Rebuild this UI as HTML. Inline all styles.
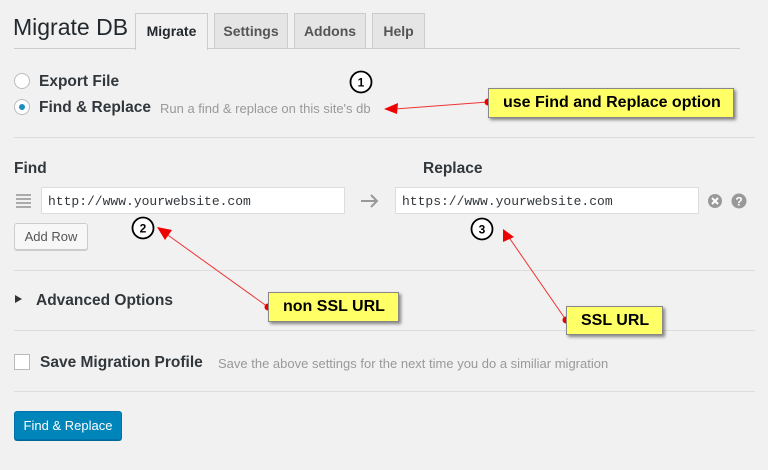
<!DOCTYPE html>
<html><head><meta charset="utf-8"><style>
*{margin:0;padding:0;box-sizing:border-box}
body{width:768px;height:470px;background:#f1f1f1;font-family:"Liberation Sans",sans-serif;color:#23282d;position:relative;overflow:hidden}
.a{position:absolute;white-space:nowrap}
.tab{position:absolute;top:13px;height:36px;background:#e5e5e5;border:1px solid #ccc;border-bottom:none;font-size:14px;font-weight:bold;color:#555;text-align:center;line-height:34px}
.hr{position:absolute;left:14px;width:741px;height:1px;background:#ddd}
.b{font-weight:bold;font-size:15.5px;color:#32373c}
.g{font-size:13px;color:#999}
.inp{position:absolute;height:27px;background:#fff;border:1px solid #ddd;font-family:"Liberation Mono",monospace;font-size:13px;color:#32373c;padding:6px 0 0 6px}
.note{position:absolute;background:#ffff66;border:1px solid #888;box-shadow:2px 2px 3px rgba(0,0,0,.45);font-weight:bold;font-size:16px;color:#000;line-height:28px}
</style></head><body>
<div class="a" style="left:13px;top:14px;font-size:23px;color:#23282d">Migrate DB</div>
<div class="tab" style="left:135px;width:73px;background:#f1f1f1;height:37px;color:#23282d">Migrate</div>
<div class="tab" style="left:214px;width:74px">Settings</div>
<div class="tab" style="left:294px;width:72px">Addons</div>
<div class="tab" style="left:372px;width:53px">Help</div>
<div style="position:absolute;left:14px;top:48px;width:121px;height:1px;background:#ccc"></div>
<div style="position:absolute;left:208px;top:48px;width:532px;height:1px;background:#ccc"></div>

<div class="a" style="left:14px;top:73px;width:16px;height:16px;border-radius:50%;background:#fff;border:1px solid #bbb"></div>
<div class="a b" style="left:39px;top:73px">Export File</div>
<div class="a" style="left:14px;top:99px;width:16px;height:16px;border-radius:50%;background:#fff;border:1px solid #bbb"></div>
<div class="a" style="left:19px;top:104px;width:6px;height:6px;border-radius:50%;background:#1e8cbe"></div>
<div class="a b" style="left:39px;top:99px">Find &amp; Replace</div>
<div class="a g" style="left:160px;top:101px">Run a find &amp; replace on this site's db</div>
<div class="hr" style="top:137px"></div>

<div class="a b" style="left:14px;top:160px">Find</div>
<div class="a b" style="left:423px;top:160px">Replace</div>
<div class="a" style="left:16px;top:194px;width:15px">
<div style="height:2px;background:#aaa;margin-bottom:2px"></div><div style="height:2px;background:#aaa;margin-bottom:2px"></div><div style="height:2px;background:#aaa;margin-bottom:2px"></div><div style="height:2px;background:#aaa"></div></div>
<div class="inp" style="left:41px;top:187px;width:304px">http://www.yourwebsite.com</div>
<div class="inp" style="left:395px;top:187px;width:304px">https://www.yourwebsite.com</div>
<svg class="a" style="left:360px;top:193px" width="20" height="16"><path d="M1 8H17M11 2L17 8L11 14" stroke="#999" stroke-width="2" fill="none"/></svg>
<svg class="a" style="left:707px;top:193px" width="40" height="16"><circle cx="8" cy="8" r="7" fill="#999"/><path d="M5 5L11 11M11 5L5 11" stroke="#fff" stroke-width="2"/><circle cx="32" cy="8" r="7.5" fill="#999"/><text x="32" y="12.5" font-size="12" font-weight="bold" fill="#fff" text-anchor="middle" font-family="Liberation Sans">?</text></svg>
<div class="a" style="left:14px;top:223px;width:74px;height:27px;border:1px solid #ccc;border-radius:3px;background:#f7f7f7;font-size:13px;color:#555;text-align:center;line-height:25px;box-shadow:0 1px 0 #ccc">Add Row</div>
<div class="hr" style="top:270px"></div>

<div class="a" style="left:15px;top:295px;width:0;height:0;border-left:7px solid #333;border-top:4px solid transparent;border-bottom:4px solid transparent"></div>
<div class="a b" style="left:36px;top:292px">Advanced Options</div>
<div class="hr" style="top:330px"></div>

<div class="a" style="left:14px;top:354px;width:16px;height:16px;background:#fff;border:1px solid #bbb"></div>
<div class="a b" style="left:40px;top:354px">Save Migration Profile</div>
<div class="a g" style="left:218px;top:356px">Save the above settings for the next time you do a similiar migration</div>
<div class="hr" style="top:391px"></div>

<div class="a" style="left:14px;top:411px;width:108px;height:29px;background:#0085ba;border:1px solid #0073aa;border-radius:3px;color:#fff;font-size:13px;text-align:center;line-height:27px;box-shadow:0 1px 0 #006799">Find &amp; Replace</div>

<svg class="a" style="left:0;top:0" width="768" height="470">
<g stroke="#e33" stroke-width="1" fill="none">
<line x1="488" y1="102" x2="395" y2="109"/>
<line x1="268" y1="307" x2="165" y2="233"/>
<line x1="566" y1="320" x2="508" y2="236"/>
</g>
<g fill="#e00">
<polygon points="384,109 398,103 397,114"/>
<polygon points="157,227 172,230 165,240"/>
<polygon points="503,229 514,237 503,242"/>
<circle cx="488" cy="102" r="3.5"/><circle cx="268" cy="307" r="3.5"/><circle cx="566" cy="320" r="3.5"/>
</g>
<g font-family="Liberation Sans" font-weight="bold" font-size="12" text-anchor="middle">
<circle cx="361" cy="82" r="10.5" fill="#fff" stroke="#000" stroke-width="1.8"/><text x="361" y="86.5">1</text>
<circle cx="143" cy="228" r="10.5" fill="#fff" stroke="#000" stroke-width="1.8"/><text x="143" y="232.5">2</text>
<circle cx="482" cy="229" r="10.5" fill="#fff" stroke="#000" stroke-width="1.8"/><text x="482" y="233.5">3</text>
</g>
</svg>
<div class="note" style="left:488px;top:88px;width:246px;height:30px;padding-left:14px">use Find and Replace option</div>
<div class="note" style="left:268px;top:292px;width:131px;height:30px;padding-left:14px">non SSL URL</div>
<div class="note" style="left:566px;top:306px;width:97px;height:29px;padding-left:14px">SSL URL</div>
</body></html>
